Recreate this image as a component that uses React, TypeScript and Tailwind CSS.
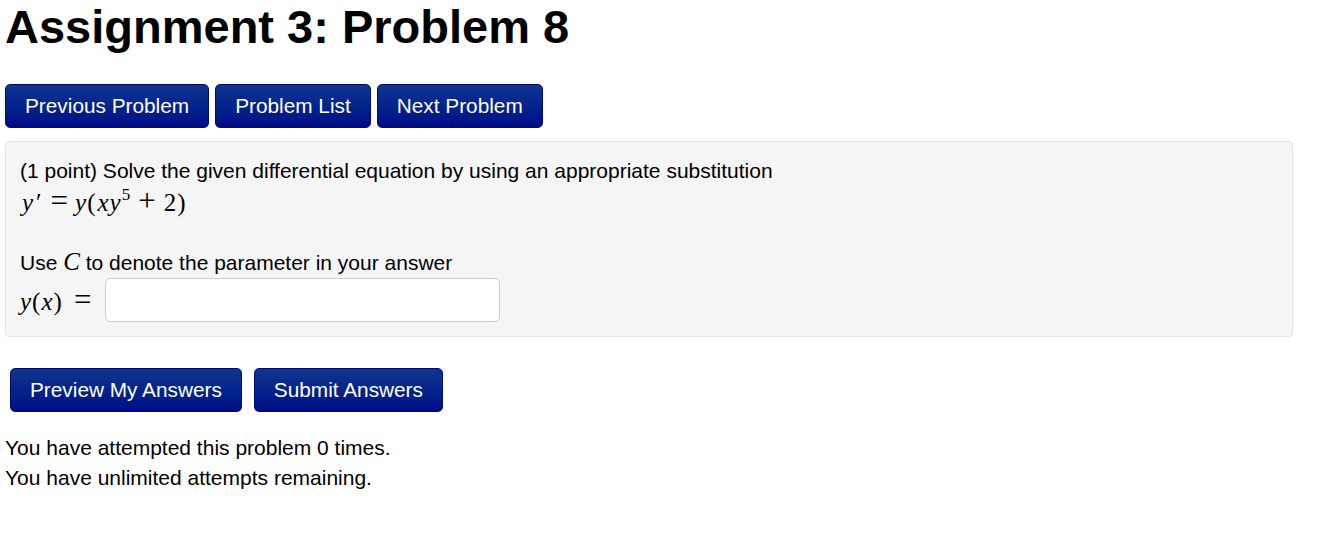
import React from "react";

const btn =
  "h-[44px] px-[19px] flex items-center rounded-[5px] text-white bg-gradient-to-b from-[#12348f] to-[#000a88] border border-[#000a70] whitespace-nowrap";

function M({ children }: { children: React.ReactNode }) {
  return <span className="font-['Liberation_Serif','DejaVu_Serif',serif] text-[25px]">{children}</span>;
}
function I({ children, cls = "" }: { children: React.ReactNode; cls?: string }) {
  return <span className={"italic " + cls}>{children}</span>;
}
function Op({ children, cls = "" }: { children: React.ReactNode; cls?: string }) {
  return <span className={"text-[31px] leading-none " + cls}>{children}</span>;
}

export default function App() {
  return (
    <div className="font-['Liberation_Sans',Arial,sans-serif] text-[21px] leading-[30px] text-black bg-white min-h-[543px] px-[5px]">
      <h1 className="text-[47px] font-bold leading-[52px] pt-[1px]">Assignment 3: Problem 8</h1>
      <div className="flex gap-[6px] mt-[31px] text-[20.8px]">
        <div className={btn}>Previous Problem</div>
        <div className={btn}>Problem List</div>
        <div className={btn}>Next Problem</div>
      </div>
      <div className="mt-[13px] w-[1288px] bg-[#f5f5f5] border border-[#e3e3e3] rounded-[4px] px-[14px] pt-[14px] pb-[14px]">
        <div>(1 point) Solve the given differential equation by using an appropriate substitution</div>
        <div className="h-[30px] flex items-center">
          <M>
            <I cls="ml-[2px]">y</I>
            <span className="ml-[3px]">′</span>
            <Op cls="ml-[9px] mr-[7px]">=</Op>
            <I>y</I>
            <span className="ml-[1px]">(</span>
            <I cls="ml-[2px]">x</I>
            <I cls="ml-[1px]">y</I>
            <sup className="text-[17px] relative -top-[11px] ml-[1px]">5</sup>
            <Op cls="ml-[8px] mr-[8px]">+</Op>2<span className="ml-[1px]">)</span>
          </M>
        </div>
        <div className="h-[31px]" />
        <div>
          Use <M><I>C</I></M> to denote the parameter in your answer
        </div>
        <div className="flex items-center h-[44px]">
          <M>
            <I>y</I>
            <span className="ml-[1px]">(</span>
            <I cls="ml-[1px]">x</I>
            <span className="ml-[1px]">)</span>
            <Op cls="ml-[12px]">=</Op>
          </M>
          <div className="ml-[14px] w-[395px] h-[44px] bg-white border border-[#cccccc] rounded-[5px]" />
        </div>
      </div>
      <div className="flex gap-[12px] mt-[31px] ml-[5px] text-[20.8px]">
        <div className={btn}>Preview My Answers</div>
        <div className={btn}>Submit Answers</div>
      </div>
      <div className="mt-[21px]">
        <div>You have attempted this problem 0 times.</div>
        <div>You have unlimited attempts remaining.</div>
      </div>
    </div>
  );
}
